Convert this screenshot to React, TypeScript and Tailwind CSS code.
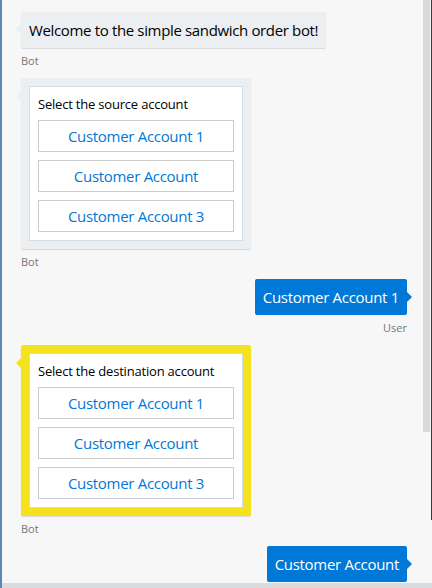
import React from "react";

const font = { fontFamily: '"Open Sans", "Noto Sans", sans-serif' };

function BotLabel() {
  return (
    <div className="mt-[6px] h-[14px] leading-[14px] text-[11px] text-[#767676]">Bot</div>
  );
}

function Card({ title, highlight }: { title: string; highlight?: boolean }) {
  const accounts = ["Customer Account 1", "Customer Account", "Customer Account 3"];
  return (
    <div className="pb-[10px]">
      <div
        className={
          highlight
            ? "relative w-[230px] p-[8px] rounded-[2px] bg-[#f4e21e] shadow-[0_1px_1px_rgba(0,0,0,0.12)]"
            : "relative w-[230px] p-[8px] rounded-[2px] bg-[#eceff1] shadow-[0_1px_1px_rgba(0,0,0,0.12)]"
        }
      >
        <div
          className={
            highlight
              ? "absolute left-[-5px] top-[13px] w-0 h-0 border-y-[5px] border-y-transparent border-r-[5px] border-r-[#f4e21e]"
              : "absolute left-[-5px] top-[14px] w-0 h-0 border-y-[5px] border-y-transparent border-r-[5px] border-r-[#eceff1]"
          }
        />
        <div className="bg-white border border-[#d2dde5] px-[8px] pt-[8px] pb-[8px]">
          <div className="h-[18px] leading-[18px] text-[13px] text-black mb-[7px] tracking-[-0.2px]">{title}</div>
          <div className="flex flex-col gap-[8px]">
            {accounts.map((a) => (
              <div
                key={a}
                className="h-[32px] flex items-center justify-center bg-white border border-[#cccccc] text-[#0078d7] text-[15px] tracking-[-0.3px]"
              >
                {a}
              </div>
            ))}
          </div>
        </div>
      </div>
      <BotLabel />
    </div>
  );
}

function UserBubble({ text, label }: { text: string; label?: boolean }) {
  return (
    <div className="pb-[10px] flex flex-col items-end">
      <div className="relative h-[36px] px-[8px] flex items-center rounded-[2px] bg-[#0078d7] text-white text-[15px] tracking-[-0.3px]">
        {text}
        <div className="absolute right-[-5px] top-[13px] w-0 h-0 border-y-[5px] border-y-transparent border-l-[5px] border-l-[#0078d7]" />
      </div>
      {label && (
        <div className="mt-[6px] h-[14px] leading-[14px] text-[11px] text-[#767676]">User</div>
      )}
    </div>
  );
}

export default function App() {
  return (
    <div className="w-[432px] h-[588px] flex overflow-hidden bg-[#f7f7f7]" style={font}>
      <div className="w-[2px] h-full bg-[#5f86bb]" />
      <div className="flex-1 flex flex-col">
        <div className="h-[583px] flex">
          <div className="flex-1 overflow-hidden pl-[19px] pr-[16px] pt-[12px]">
            <div className="pb-[10px]">
              <div className="relative inline-flex h-[36px] items-center px-[8px] rounded-[2px] bg-[#eceff1] shadow-[0_1px_1px_rgba(0,0,0,0.12)] text-[15px] text-black tracking-[-0.35px]">
                <div className="absolute left-[-5px] top-[12px] w-0 h-0 border-y-[5px] border-y-transparent border-r-[5px] border-r-[#eceff1]" />
                Welcome to the simple sandwich order bot!
              </div>
              <BotLabel />
            </div>
            <Card title="Select the source account" />
            <UserBubble text="Customer Account 1" label />
            <Card title="Select the destination account" highlight />
            <UserBubble text="Customer Account" />
          </div>
          <div className="w-[9px] flex">
            <div className="w-[7px] h-[432px] bg-[#d7dbde]" />
            <div className="w-[1px]" />
            <div className="w-[1px] h-[520px] bg-[#3a3a3a]" />
          </div>
        </div>
        <div className="h-[5px] bg-[#d9dcdf]" />
      </div>
    </div>
  );
}
